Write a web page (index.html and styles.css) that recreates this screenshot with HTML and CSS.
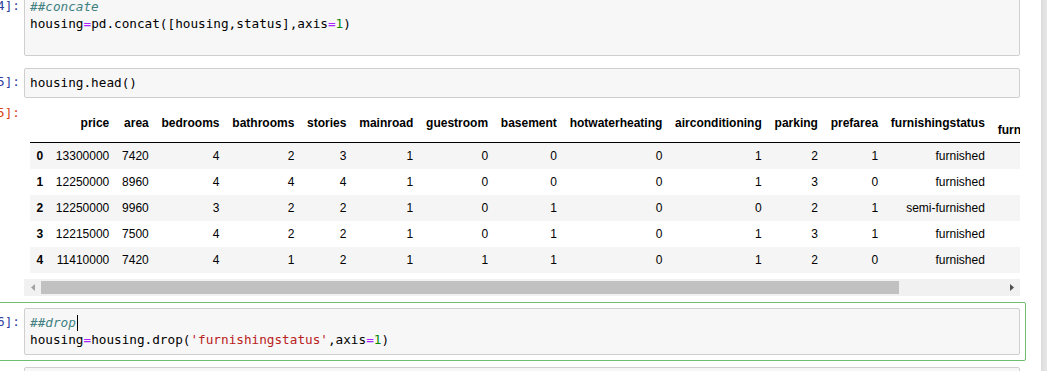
FILE: index.html
```html
<!DOCTYPE html>
<html lang="en">
<head>
    <meta charset="UTF-8">
    <meta name="viewport" content="width=device-width, initial-scale=1.0">
    <title>Housing - Notebook</title>
    <link rel="stylesheet" href="styles.css">
</head>
<body>
    <div class="notebook">
        <div class="cell">
            <div class="input">
                <div class="prompt in-prompt">In&nbsp;[4]:</div>
                <div class="input-area">
                    <div class="line"><span class="cm-comment">##concate</span></div>
                    <div class="line">housing<span class="cm-op">=</span>pd.concat([housing,status],axis<span class="cm-op">=</span><span class="cm-num">1</span>)</div>
                    <div class="line"></div>
                </div>
            </div>
        </div>

        <div class="cell">
            <div class="input">
                <div class="prompt in-prompt">In&nbsp;[5]:</div>
                <div class="input-area">
                    <div class="line">housing.head()</div>
                </div>
            </div>
            <div class="output">
                <div class="prompt out-prompt">Out[5]:</div>
                <div class="output-subarea">
                    <div class="table-wrap">
                        <table class="dataframe">
                            <thead>
                                <tr>
                                    <th></th>
                                    <th>price</th>
                                    <th>area</th>
                                    <th>bedrooms</th>
                                    <th>bathrooms</th>
                                    <th>stories</th>
                                    <th>mainroad</th>
                                    <th>guestroom</th>
                                    <th>basement</th>
                                    <th>hotwaterheating</th>
                                    <th>airconditioning</th>
                                    <th>parking</th>
                                    <th>prefarea</th>
                                    <th>furnishingstatus</th>
                                    <th class="low">furnished</th>
                                </tr>
                            </thead>
                            <tbody>
                                <tr>
                                    <th>0</th><td>13300000</td><td>7420</td><td>4</td><td>2</td><td>3</td><td>1</td><td>0</td><td>0</td><td>0</td><td>1</td><td>2</td><td>1</td><td>furnished</td><td>1</td>
                                </tr>
                                <tr>
                                    <th>1</th><td>12250000</td><td>8960</td><td>4</td><td>4</td><td>4</td><td>1</td><td>0</td><td>0</td><td>0</td><td>1</td><td>3</td><td>0</td><td>furnished</td><td>1</td>
                                </tr>
                                <tr>
                                    <th>2</th><td>12250000</td><td>9960</td><td>3</td><td>2</td><td>2</td><td>1</td><td>0</td><td>1</td><td>0</td><td>0</td><td>2</td><td>1</td><td>semi-furnished</td><td>0</td>
                                </tr>
                                <tr>
                                    <th>3</th><td>12215000</td><td>7500</td><td>4</td><td>2</td><td>2</td><td>1</td><td>0</td><td>1</td><td>0</td><td>1</td><td>3</td><td>1</td><td>furnished</td><td>1</td>
                                </tr>
                                <tr>
                                    <th>4</th><td>11410000</td><td>7420</td><td>4</td><td>1</td><td>2</td><td>1</td><td>1</td><td>1</td><td>0</td><td>1</td><td>2</td><td>0</td><td>furnished</td><td>1</td>
                                </tr>
                            </tbody>
                        </table>
                    </div>
                    <div class="hscroll">
                        <div class="scroll-btn">
                            <svg width="4" height="7" viewBox="0 0 4 7"><polygon points="4,0 4,7 0,3.5" fill="#a3a3a3"/></svg>
                        </div>
                        <div class="scroll-thumb"></div>
                        <div class="scroll-rest"></div>
                        <div class="scroll-btn">
                            <svg width="4" height="7" viewBox="0 0 4 7"><polygon points="0,0 0,7 4,3.5" fill="#505050"/></svg>
                        </div>
                    </div>
                </div>
            </div>
        </div>

        <div class="cell selected">
            <div class="input">
                <div class="prompt in-prompt">In&nbsp;[6]:</div>
                <div class="input-area">
                    <div class="line"><span class="cm-comment">##drop</span><span class="cursor"></span></div>
                    <div class="line">housing<span class="cm-op">=</span>housing.drop(<span class="cm-str">'furnishingstatus'</span>,axis<span class="cm-op">=</span><span class="cm-num">1</span>)</div>
                </div>
            </div>
        </div>

        <div class="cell">
            <div class="input">
                <div class="prompt in-prompt">In&nbsp;[&nbsp;]:</div>
                <div class="input-area">
                    <div class="line"></div>
                </div>
            </div>
        </div>
    </div>
</body>
</html>
```

FILE: styles.css
```css
/* notebook page, scrolled part-way down */
body {
    margin: 0;
    background-color: #eeeeee;
    font-family: "Liberation Sans", Arial, sans-serif;
    overflow: hidden;
}
.notebook {
    margin: -14px 6px 0 -100px;
    padding: 0 15px 15px 15px;
    background: #ffffff;
    box-shadow: 0 0 12px 1px rgba(87, 87, 87, 0.2);
}
.cell {
    border: 1px solid transparent;
    border-radius: 2px;
    padding: 5px;
}
.cell.selected {
    border-color: #6fbd6f;
}
.input, .output {
    display: flex;
    align-items: flex-start;
}
.prompt {
    flex: none;
    width: 103px;
    box-sizing: border-box;
    padding: 5px 4px 0 0;
    text-align: right;
    font-family: "DejaVu Sans Mono", "Liberation Mono", monospace;
    font-size: 12.7px;
    line-height: 17px;
    white-space: nowrap;
}
.in-prompt {
    color: #303f9f;
}
.out-prompt {
    color: #d84315;
    padding-top: 6px;
}

/* code editor */
.input-area {
    flex: 1;
    min-width: 0;
    background: #f7f7f7;
    border: 1px solid #cfcfcf;
    border-radius: 2px;
    padding: 5px 5px 6px;
    font-family: "DejaVu Sans Mono", "Liberation Mono", monospace;
    font-size: 12.7px;
    line-height: 17px;
    color: #000000;
}
.line {
    height: 17px;
    white-space: pre;
}
.cm-comment {
    color: #408080;
    font-style: italic;
}
.cm-op {
    color: #aa22ff;
}
.cm-num {
    color: #008800;
}
.cm-str {
    color: #ba2121;
}
.cursor {
    display: inline-block;
    width: 1px;
    height: 16px;
    margin-left: 1px;
    vertical-align: -4px;
    background: #000000;
}

/* dataframe output */
.output-subarea {
    flex: 1;
    min-width: 0;
}
.table-wrap {
    overflow: hidden;
    padding: 6px 6px 6px;
}
.dataframe {
    border-collapse: collapse;
    border-spacing: 0;
    font-size: 12px;
    color: #000000;
    white-space: nowrap;
}
.dataframe th, .dataframe td {
    text-align: right;
    vertical-align: middle;
    padding: 6px 6.4px;
    line-height: 14px;
}
.dataframe thead th {
    height: 26px;
    border-bottom: 1px solid #000000;
    font-weight: bold;
}
.dataframe thead th.low {
    vertical-align: bottom;
    padding-bottom: 5px;
}
.dataframe tbody tr:nth-child(odd) {
    background: #f5f5f5;
}

/* horizontal scrollbar under the table */
.hscroll {
    display: flex;
    height: 17px;
    background: #f1f1f1;
}
.scroll-btn {
    width: 17px;
    display: flex;
    align-items: center;
    justify-content: center;
}
.scroll-thumb {
    width: 858px;
    margin: 2px 0;
    background: #c1c1c1;
}
.scroll-rest {
    flex: 1;
}
```
